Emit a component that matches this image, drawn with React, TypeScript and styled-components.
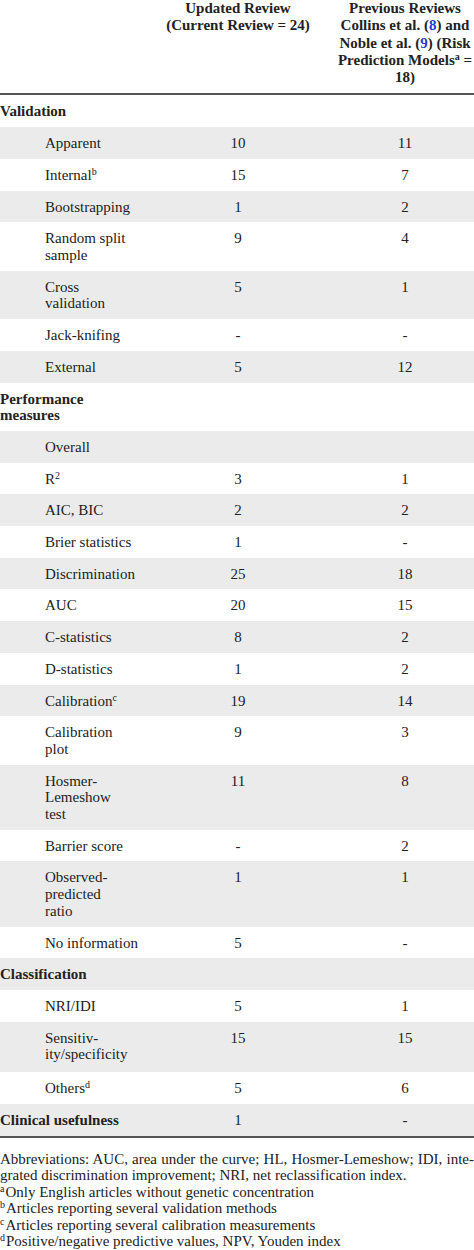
import styled, { createGlobalStyle } from "styled-components";
import { Fragment, ReactNode } from "react";

const GlobalStyle = createGlobalStyle`
  html, body {
    margin: 0;
    padding: 0;
    background: #fff;
    overflow-x: hidden;
  }
  body {
    font-family: "Liberation Serif", "Times New Roman", serif;
    color: #222;
  }
`;

type Row = {
  label: ReactNode[];
  updated?: string;
  previous?: string;
  category?: boolean;
  tall?: boolean;
};

const Sup = styled.sup`
  font-size: 10px;
  line-height: 0;
  vertical-align: 5px;
`;

const ROWS: Row[] = [
  { label: ["Validation"], category: true },
  { label: ["Apparent"], updated: "10", previous: "11" },
  { label: [<>Internal<Sup>b</Sup></>], updated: "15", previous: "7" },
  { label: ["Bootstrapping"], updated: "1", previous: "2" },
  { label: ["Random split", "sample"], updated: "9", previous: "4" },
  { label: ["Cross", "validation"], updated: "5", previous: "1" },
  { label: ["Jack-knifing"], updated: "-", previous: "-" },
  { label: ["External"], updated: "5", previous: "12" },
  { label: ["Performance", "measures"], category: true },
  { label: ["Overall"] },
  { label: [<>R<Sup>2</Sup></>], updated: "3", previous: "1" },
  { label: ["AIC, BIC"], updated: "2", previous: "2" },
  { label: ["Brier statistics"], updated: "1", previous: "-" },
  { label: ["Discrimination"], updated: "25", previous: "18" },
  { label: ["AUC"], updated: "20", previous: "15" },
  { label: ["C-statistics"], updated: "8", previous: "2" },
  { label: ["D-statistics"], updated: "1", previous: "2" },
  { label: [<>Calibration<Sup>c</Sup></>], updated: "19", previous: "14" },
  { label: ["Calibration", "plot"], updated: "9", previous: "3" },
  { label: ["Hosmer-", "Lemeshow", "test"], updated: "11", previous: "8" },
  { label: ["Barrier score"], updated: "-", previous: "2" },
  { label: ["Observed-", "predicted", "ratio"], updated: "1", previous: "1" },
  { label: ["No information"], updated: "5", previous: "-" },
  { label: ["Classification"], category: true },
  { label: ["NRI/IDI"], updated: "5", previous: "1" },
  { label: ["Sensitiv-", "ity/specificity"], updated: "15", previous: "15", tall: true },
  { label: [<>Others<Sup>d</Sup></>], updated: "5", previous: "6" },
  { label: ["Clinical usefulness"], updated: "1", previous: "-", category: true },
];

const Table = styled.table`
  width: 474px;
  table-layout: fixed;
  border-collapse: collapse;
  font-size: 15px;
`;

const HeadCell = styled.th`
  padding: 0 0 7px;
  line-height: 17.3px;
  font-weight: bold;
  text-align: center;
  vertical-align: top;
  white-space: nowrap;
  border-bottom: 2px solid #555;
`;

const BodyRow = styled.tr`
  &:nth-child(even) {
    background: #ebebeb;
  }
`;

const LabelCell = styled.td<{ $category?: boolean; $tall?: boolean }>`
  padding: 8px 0 ${(p) => (p.$tall ? "9px" : "7px")} ${(p) => (p.$category ? "0" : "45px")};
  line-height: 16.7px;
  font-weight: ${(p) => (p.$category ? "bold" : "normal")};
  white-space: nowrap;
  vertical-align: top;
`;

const ValueCell = styled.td`
  padding: 8px 0 7px;
  line-height: 16.7px;
  text-align: center;
  vertical-align: top;
`;

const Ref = styled.span`
  color: #2b3bc4;
`;

const Footer = styled.tfoot`
  td {
    border-top: 2px solid #555;
    padding: 0;
  }
`;

const Notes = styled.div`
  margin-top: 13px;
  font-size: 15px;
  line-height: 16.6px;
`;

const JustifiedLine = styled.div`
  text-align: justify;
  text-align-last: justify;
  white-space: nowrap;
`;

const Note = styled.div`
  sup {
    font-size: 10px;
    line-height: 0;
    vertical-align: 5px;
    margin-right: 1px;
  }
`;

const lines = (items: ReactNode[]) =>
  items.map((item, i) => (
    <Fragment key={i}>
      {i > 0 && <br />}
      {item}
    </Fragment>
  ));

export default function App() {
  return (
    <>
      <GlobalStyle />
      <Table>
        <colgroup>
          <col style={{ width: 140 }} />
          <col style={{ width: 196 }} />
          <col style={{ width: 138 }} />
        </colgroup>
        <thead>
          <tr>
            <HeadCell />
            <HeadCell>
              Updated Review
              <br />
              (Current Review = 24)
            </HeadCell>
            <HeadCell>
              Previous Reviews
              <br />
              Collins et al. (<Ref>8</Ref>) and
              <br />
              Noble et al. (<Ref>9</Ref>) (Risk
              <br />
              Prediction Models<Sup>a</Sup> =
              <br />
              18)
            </HeadCell>
          </tr>
        </thead>
        <tbody>
          {ROWS.map((row, i) => (
            <BodyRow key={i}>
              <LabelCell $category={row.category} $tall={row.tall}>
                {lines(row.label)}
              </LabelCell>
              <ValueCell>{row.updated}</ValueCell>
              <ValueCell>{row.previous}</ValueCell>
            </BodyRow>
          ))}
        </tbody>
        <Footer>
          <tr>
            <td colSpan={3} />
          </tr>
        </Footer>
      </Table>
      <Notes>
        <JustifiedLine>Abbreviations: AUC, area under the curve; HL, Hosmer-Lemeshow; IDI, inte-</JustifiedLine>
        <div>grated discrimination improvement; NRI, net reclassification index.</div>
        <Note>
          <sup>a</sup>Only English articles without genetic concentration
        </Note>
        <Note>
          <sup>b</sup>Articles reporting several validation methods
        </Note>
        <Note>
          <sup>c</sup>Articles reporting several calibration measurements
        </Note>
        <Note>
          <sup>d</sup>Positive/negative predictive values, NPV, Youden index
        </Note>
      </Notes>
    </>
  );
}
